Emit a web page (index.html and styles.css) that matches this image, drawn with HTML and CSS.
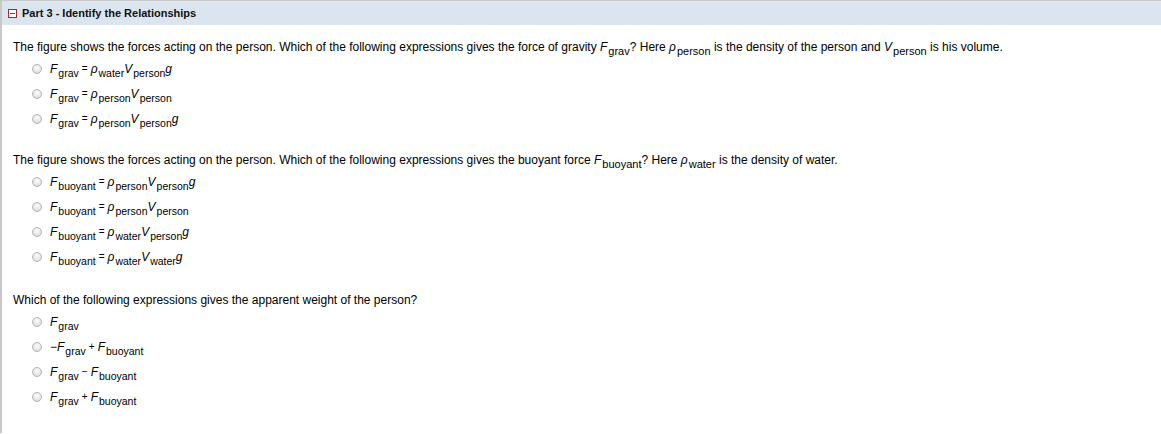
FILE: index.html
```html
<!DOCTYPE html>
<html>
<head>
<meta charset="utf-8">
<link rel="stylesheet" href="styles.css">
</head>
<body>
<div class="panel">
  <div class="header">
    <span class="toggle"><span class="bar"></span></span>
    <span class="title">Part 3 - Identify the Relationships</span>
  </div>
  <div class="content">
    <div class="question">
      <p class="prompt">The figure shows the forces acting on the person. Which of the following expressions gives the force of gravity <i class="m">F<sub>grav</sub></i>? Here <i class="m">ρ<sub>person</sub></i> is the density of the person and <i class="m">V<sub>person</sub></i> is his volume.</p>
      <ul class="options">
        <li><span class="radio"></span><span class="expr"><i>F</i><sub>grav</sub><span class="op">=</span><i>ρ</i><sub>water</sub><i>V</i><sub>person</sub><i>g</i></span></li>
        <li><span class="radio"></span><span class="expr"><i>F</i><sub>grav</sub><span class="op">=</span><i>ρ</i><sub>person</sub><i>V</i><sub>person</sub></span></li>
        <li><span class="radio"></span><span class="expr"><i>F</i><sub>grav</sub><span class="op">=</span><i>ρ</i><sub>person</sub><i>V</i><sub>person</sub><i>g</i></span></li>
      </ul>
    </div>
    <div class="question">
      <p class="prompt">The figure shows the forces acting on the person. Which of the following expressions gives the buoyant force <i class="m">F<sub>buoyant</sub></i>? Here <i class="m">ρ<sub>water</sub></i> is the density of water.</p>
      <ul class="options">
        <li><span class="radio"></span><span class="expr"><i>F</i><sub>buoyant</sub><span class="op">=</span><i>ρ</i><sub>person</sub><i>V</i><sub>person</sub><i>g</i></span></li>
        <li><span class="radio"></span><span class="expr"><i>F</i><sub>buoyant</sub><span class="op">=</span><i>ρ</i><sub>person</sub><i>V</i><sub>person</sub></span></li>
        <li><span class="radio"></span><span class="expr"><i>F</i><sub>buoyant</sub><span class="op">=</span><i>ρ</i><sub>water</sub><i>V</i><sub>person</sub><i>g</i></span></li>
        <li><span class="radio"></span><span class="expr"><i>F</i><sub>buoyant</sub><span class="op">=</span><i>ρ</i><sub>water</sub><i>V</i><sub>water</sub><i>g</i></span></li>
      </ul>
    </div>
    <div class="question">
      <p class="prompt">Which of the following expressions gives the apparent weight of the person?</p>
      <ul class="options">
        <li><span class="radio"></span><span class="expr"><i>F</i><sub>grav</sub></span></li>
        <li><span class="radio"></span><span class="expr">−<i>F</i><sub>grav</sub><span class="op">+</span><i>F</i><sub>buoyant</sub></span></li>
        <li><span class="radio"></span><span class="expr"><i>F</i><sub>grav</sub><span class="op">−</span><i>F</i><sub>buoyant</sub></span></li>
        <li><span class="radio"></span><span class="expr"><i>F</i><sub>grav</sub><span class="op">+</span><i>F</i><sub>buoyant</sub></span></li>
      </ul>
    </div>
  </div>
</div>
</body>
</html>
```

FILE: styles.css
```css
html, body {
  margin: 0;
  padding: 0;
  background: #ffffff;
}
body {
  font-family: "Liberation Sans", Arial, sans-serif;
  color: #000;
  font-size: 12px;
}
.panel {
  border-top: 1px solid #c8c8c8;
  border-left: 2px solid #c8c8c8;
  height: 433px;
  box-sizing: border-box;
}
.header {
  height: 24px;
  background: #dbe5ef;
  display: flex;
  align-items: center;
  padding-left: 6px;
  gap: 5px;
}
.toggle {
  width: 7px;
  height: 7px;
  border: 1px solid #a52a2a;
  background: #fff;
  display: flex;
  align-items: center;
  justify-content: center;
  margin-top: 1px;
}
.toggle .bar {
  width: 5px;
  height: 1px;
  background: #a52a2a;
}
.title {
  font-weight: bold;
  font-size: 11px;
  color: #111;
}
.content {
  padding: 14px 0 0 11px;
}
.question {
  margin-bottom: 21px;
}
.question:nth-child(2) {
  margin-bottom: 23px;
}
.prompt {
  margin: 0 0 1px 0;
  line-height: 16px;
  font-size: 12px;
}
.prompt .m {
  font-style: italic;
}
.prompt sub {
  font-style: normal;
  font-size: 11px;
  vertical-align: -4px;
  line-height: 0;
  margin-left: 1px;
}
.options {
  list-style: none;
  margin: 0;
  padding: 0 0 0 19px;
}
.options li {
  height: 25px;
  display: flex;
  align-items: center;
  gap: 8px;
}
.radio {
  width: 10px;
  height: 10px;
  border-radius: 50%;
  box-sizing: border-box;
  border: 1px solid #b4b4b4;
  background: radial-gradient(circle at 50% 35%, #fbfbfb 0%, #e6e6e6 60%, #d4d4d4 100%);
}
.expr {
  font-size: 12px;
  white-space: nowrap;
}
.expr i {
  font-style: italic;
}
.expr sub {
  font-size: 10.5px;
  vertical-align: -4px;
  line-height: 0;
  margin-left: 1px;
}
.expr .op {
  font-size: 10px;
  margin: 0 3px;
  vertical-align: 1px;
}
```
